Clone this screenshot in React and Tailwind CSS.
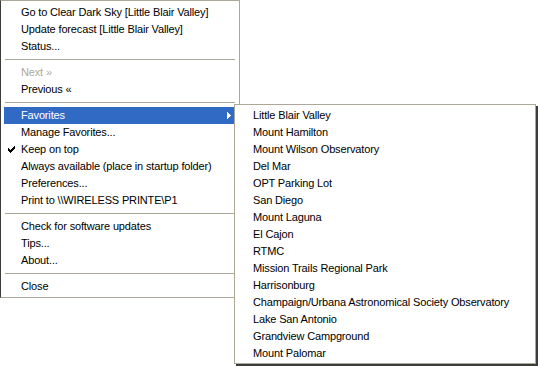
import React from 'react';

const mainItems = [
  { label: 'Go to Clear Dark Sky [Little Blair Valley]' },
  { label: 'Update forecast [Little Blair Valley]' },
  { label: 'Status...' },
  { sep: true },
  { label: 'Next »', disabled: true },
  { label: 'Previous «' },
  { sep: true },
  { label: 'Favorites', active: true, submenu: true },
  { label: 'Manage Favorites...' },
  { label: 'Keep on top', checked: true },
  { label: 'Always available (place in startup folder)' },
  { label: 'Preferences...' },
  { label: 'Print to \\\\WIRELESS PRINTE\\P1' },
  { sep: true },
  { label: 'Check for software updates' },
  { label: 'Tips...' },
  { label: 'About...' },
  { sep: true },
  { label: 'Close' },
];

const favorites = [
  'Little Blair Valley',
  'Mount Hamilton',
  'Mount Wilson Observatory',
  'Del Mar',
  'OPT Parking Lot',
  'San Diego',
  'Mount Laguna',
  'El Cajon',
  'RTMC',
  'Mission Trails Regional Park',
  'Harrisonburg',
  'Champaign/Urbana Astronomical Society Observatory',
  'Lake San Antonio',
  'Grandview Campground',
  'Mount Palomar',
];

// classic 7x7 menu check bitmap
const CheckMark = () => (
  <svg width="7" height="7" viewBox="0 0 7 7" shapeRendering="crispEdges" className="absolute left-[4px] top-[5px]">
    <rect x="6" y="0" width="1" height="1" fill="#000" />
    <rect x="5" y="1" width="2" height="1" fill="#000" />
    <rect x="0" y="2" width="1" height="1" fill="#000" />
    <rect x="4" y="2" width="3" height="1" fill="#000" />
    <rect x="0" y="3" width="2" height="1" fill="#000" />
    <rect x="3" y="3" width="3" height="1" fill="#000" />
    <rect x="0" y="4" width="5" height="1" fill="#000" />
    <rect x="1" y="5" width="3" height="1" fill="#000" />
    <rect x="2" y="6" width="1" height="1" fill="#000" />
  </svg>
);

const SubArrow = () => (
  <svg width="4" height="7" viewBox="0 0 4 7" shapeRendering="crispEdges" className="absolute right-[5px] top-[5px]">
    <rect x="0" y="0" width="1" height="7" fill="#fff" />
    <rect x="1" y="1" width="1" height="5" fill="#fff" />
    <rect x="2" y="2" width="1" height="3" fill="#fff" />
    <rect x="3" y="3" width="1" height="1" fill="#fff" />
  </svg>
);

const Separator = () => (
  <div className="h-[9px] flex items-center px-[1px]">
    <div className="h-px w-full bg-[#aca899]" />
  </div>
);

const MenuItem = ({ item }) => (
  <div
    className={`relative h-[17px] leading-[17px] pl-[17px] whitespace-nowrap ${
      item.active ? 'bg-[#316ac5] text-white' : item.disabled ? 'text-[#aca899]' : 'text-black'
    }`}
  >
    {item.checked && <CheckMark />}
    {item.label}
    {item.submenu && <SubArrow />}
  </div>
);

export default function App() {
  return (
    <div className="relative w-[538px] h-[366px] bg-white overflow-hidden font-['Liberation_Sans',Arial,sans-serif] text-[11px] tracking-[-0.15px]">
      <div className="w-[240px] h-[298px] bg-white border border-[#aca899] border-l-[#3c3c3c] pt-[3px] pb-[2px] px-[3px]">
        {mainItems.map((item, i) =>
          item.sep ? <Separator key={i} /> : <MenuItem key={i} item={item} />
        )}
      </div>

      <div className="absolute left-[234px] top-[104px] w-[302px] h-[260px] bg-white border border-[#aca899] pt-[2px] pb-[1px] px-[3px] shadow-[2px_2px_0_#3c3c3c]">
        {favorites.map((name) => (
          <div key={name} className="h-[17px] leading-[17px] pl-[15px] whitespace-nowrap text-black">
            {name}
          </div>
        ))}
      </div>
    </div>
  );
}
